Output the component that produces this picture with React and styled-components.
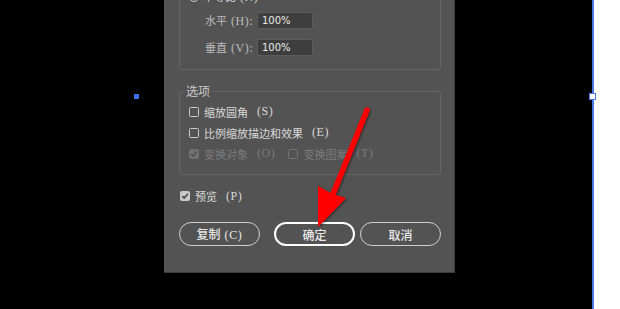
import React from 'react';
import styled, { createGlobalStyle, css } from 'styled-components';

const GlobalStyle = createGlobalStyle`
  html, body {
    margin: 0;
    padding: 0;
    background: #000000;
    overflow: hidden;
  }
  * { box-sizing: border-box; }
`;

const Stage = styled.div`
  position: relative;
  display: flex;
  width: 620px;
  height: 309px;
  background: #000000;
  overflow: hidden;
  font-family: "Noto Sans CJK SC", "Noto Sans", sans-serif;
`;

const Canvas = styled.div`
  position: relative;
  flex: 1;
  background: #000000;
`;

const Artboard = styled.div`
  position: relative;
  width: 28px;
  background: #ffffff;
  border-left: 2px solid #4a78e0;
`;

const AnchorDot = styled.span`
  position: absolute;
  left: 134px;
  top: 94px;
  width: 5px;
  height: 5px;
  background: #3e6ff2;
`;

const EdgeHandle = styled.span`
  position: absolute;
  left: -5px;
  top: 93px;
  width: 7px;
  height: 7px;
  background: #ffffff;
  border: 1px solid #4a78e0;
`;

const Dialog = styled.div`
  position: absolute;
  left: 164px;
  top: 0;
  width: 291px;
  height: 273px;
  display: flex;
  flex-direction: column;
  padding: 0 13px 0 15px;
  background: #535353;
  border-right: 1px solid #3c3c3c;
  border-bottom: 1px solid #3c3c3c;
  overflow: hidden;
  color: #d4d4d4;
  font-size: 11px;
`;

const TopGroup = styled.div`
  display: flex;
  flex-direction: column;
  margin-top: -20px;
  padding: 7px 0 13px 25px;
  border: 1px solid #646464;
  border-radius: 3px;
`;

const RadioRow = styled.div`
  display: flex;
  align-items: center;
  gap: 4px;
  height: 17px;
  margin-left: -16px;
`;

const Radio = styled.span`
  width: 10px;
  height: 10px;
  border-radius: 50%;
  border: 1.5px solid #cfcfcf;
`;

const FieldRow = styled.div`
  display: flex;
  align-items: center;
  height: 17px;
  margin-top: ${p => p.$gap}px;
`;

const FieldLabel = styled.span`
  width: 52px;
  color: #bdbdbd;
  white-space: nowrap;
`;

const Field = styled.div`
  width: 56px;
  height: 17px;
  padding-left: 4px;
  display: flex;
  align-items: center;
  background: #3e3e3e;
  border: 1px solid #5c5c5c;
  border-radius: 2px;
  color: #ececec;
  font-family: "DejaVu Sans", sans-serif;
  font-size: 10px;
`;

const Key = styled.span`
  margin-left: 4px;
  font-family: "Liberation Serif", serif;
  font-size: 12px;
  letter-spacing: 0.6px;
`;

const Options = styled.fieldset`
  margin: 14px 0 0 0;
  padding: 3px 0 10px 9px;
  border: 1px solid #646464;
  border-radius: 3px;
  min-width: 0;
`;

const Legend = styled.legend`
  margin-left: -5px;
  padding: 0 2px;
  font-size: 12px;
  line-height: 14px;
  color: #c9c9c9;
`;

const CheckRow = styled.div`
  display: flex;
  align-items: center;
  height: ${p => p.$h || 21}px;
  margin-top: ${p => p.$top || 0}px;
  margin-left: ${p => p.$left || 0}px;
`;

const CheckItem = styled.label`
  display: flex;
  align-items: center;
  gap: 5px;
  margin-left: ${p => p.$left || 0}px;
  color: ${p => (p.$disabled ? '#7b7b7b' : '#dadada')};
  white-space: nowrap;
`;

const Box = styled.span`
  width: 10px;
  height: 10px;
  display: flex;
  align-items: center;
  justify-content: center;
  border-radius: 1.5px;
  border: 1.5px solid ${p => (p.$disabled ? '#717171' : '#c9c9c9')};
  ${p =>
    p.$checked &&
    css`
      background: ${p.$disabled ? '#717171' : '#c9c9c9'};
    `}
`;

const ButtonRow = styled.div`
  display: flex;
  align-items: center;
  gap: 5px;
  margin-top: 18px;
`;

const Button = styled.button`
  width: 81px;
  height: 24px;
  padding: 0;
  border-radius: 12px;
  border: ${p => (p.$primary ? '2px solid #ffffff' : '1.5px solid #cfcfcf')};
  background: transparent;
  color: #e8e8e8;
  font-family: inherit;
  font-size: 12px;
  font-weight: 500;
  margin-right: ${p => (p.$push ? 'auto' : '0')};
`;

const ArrowLayer = styled.svg`
  position: absolute;
  left: 0;
  top: 0;
  pointer-events: none;
`;

const Check = ({ disabled }) => (
  <svg width="8" height="8" viewBox="0 0 8 8">
    <path
      d="M1.2 4.2 L3.2 6.1 L6.9 1.8"
      fill="none"
      stroke={disabled ? '#545454' : '#4a4a4a'}
      strokeWidth="1.6"
    />
  </svg>
);

const CheckBox = ({ checked, disabled, children, left }) => (
  <CheckItem $disabled={disabled} $left={left}>
    <Box $checked={checked} $disabled={disabled}>
      {checked && <Check disabled={disabled} />}
    </Box>
    {children}
  </CheckItem>
);

export default function App() {
  return (
    <>
      <GlobalStyle />
      <Stage>
        <Canvas>
          <AnchorDot />
          <Dialog>
            <TopGroup>
              <RadioRow>
                <Radio />
                <span>不等比<Key>(N)</Key></span>
              </RadioRow>
              <FieldRow $gap={7}>
                <FieldLabel>水平<Key>(H)</Key>:</FieldLabel>
                <Field>100%</Field>
              </FieldRow>
              <FieldRow $gap={10}>
                <FieldLabel>垂直<Key>(V)</Key>:</FieldLabel>
                <Field>100%</Field>
              </FieldRow>
            </TopGroup>

            <Options>
              <Legend>选项</Legend>
              <CheckRow>
                <CheckBox>缩放圆角<Key>(S)</Key></CheckBox>
              </CheckRow>
              <CheckRow>
                <CheckBox>比例缩放描边和效果<Key>(E)</Key></CheckBox>
              </CheckRow>
              <CheckRow>
                <CheckBox checked disabled>变换对象<Key>(O)</Key></CheckBox>
                <CheckBox disabled left={13}>变换图案<Key>(T)</Key></CheckBox>
              </CheckRow>
            </Options>

            <CheckRow $h={16} $top={13} $left={1}>
              <CheckBox checked>预览<Key>(P)</Key></CheckBox>
            </CheckRow>

            <ButtonRow>
              <Button $push>复制<Key>(C)</Key></Button>
              <Button $primary>确定</Button>
              <Button>取消</Button>
            </ButtonRow>
          </Dialog>
        </Canvas>
        <Artboard>
          <EdgeHandle />
        </Artboard>
        <ArrowLayer width="620" height="309" viewBox="0 0 620 309">
          <defs>
            <filter id="shade" x="-20%" y="-20%" width="140%" height="140%">
              <feDropShadow dx="1" dy="1" stdDeviation="1" floodColor="#000" floodOpacity="0.5" />
            </filter>
          </defs>
          <g filter="url(#shade)" fill="#ff0000">
            <line x1="367" y1="110" x2="333" y2="194" stroke="#ff0000" strokeWidth="5.5" strokeLinecap="round" />
            <polygon points="318,186 332,194 346,198 318,227" />
          </g>
        </ArrowLayer>
      </Stage>
    </>
  );
}
